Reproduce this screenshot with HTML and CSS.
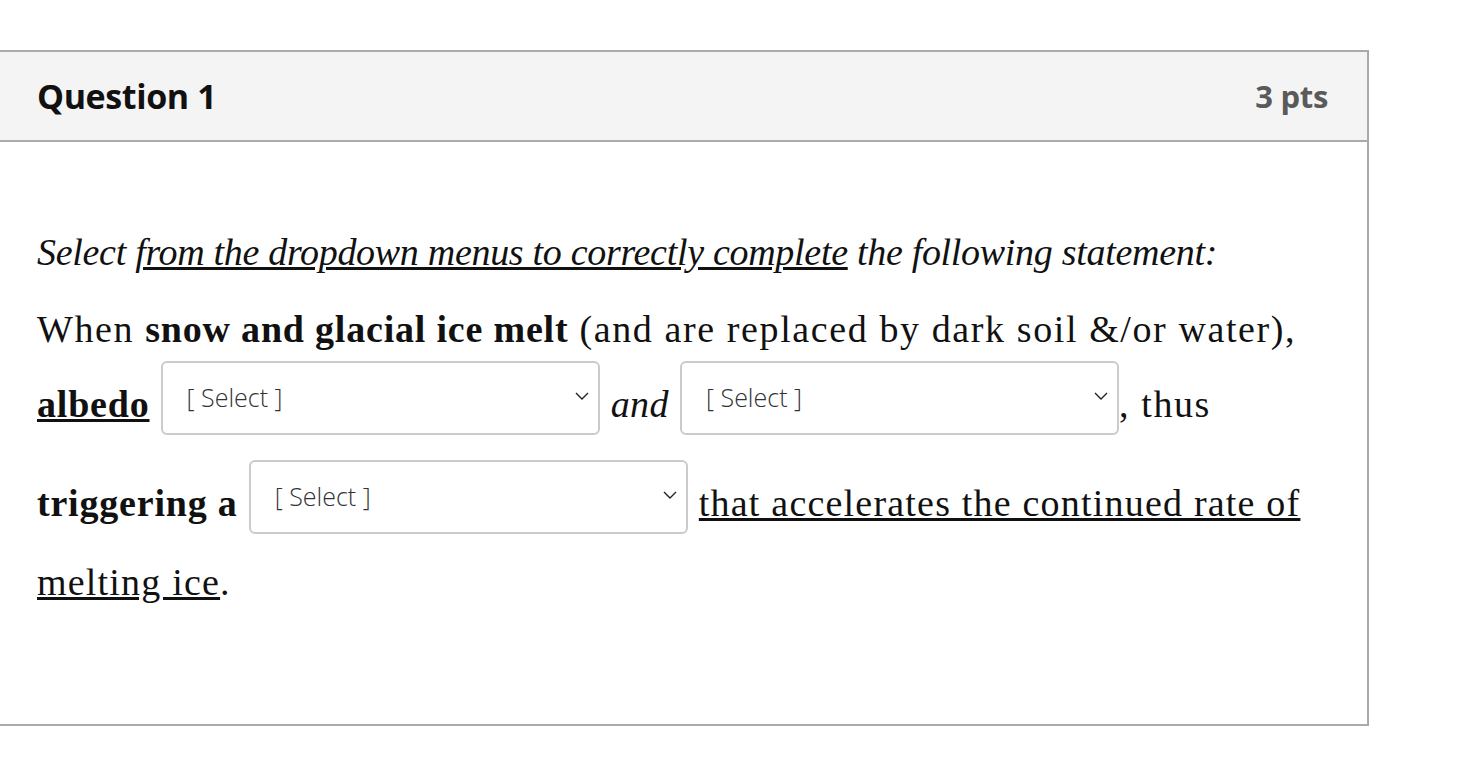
FILE: index.html
```html
<!DOCTYPE html>
<html>
<head>
<meta charset="utf-8">
<link rel="stylesheet" href="styles.css">
</head>
<body>
<div class="question">
  <div class="q-header">
    <span class="q-title">Question 1</span>
    <span class="q-pts">3 pts</span>
  </div>
  <div class="q-body">
    <p class="intro"><em>Select <u>from the dropdown menus to correctly complete</u> the following statement:</em></p>
    <p class="stmt">When <b>snow and glacial ice melt</b> (and are replaced by dark soil &amp;/or water), <b><u>albedo</u></b> <span class="sel"><span class="sel-inner"><span class="sel-text">[ Select ]</span><svg class="chev" viewBox="0 0 14 8" width="14" height="8"><path d="M1 1 L7 7 L13 1" fill="none" stroke="#222" stroke-width="1.4"/></svg></span></span> <em>and</em> <span class="sel"><span class="sel-inner"><span class="sel-text">[ Select ]</span><svg class="chev" viewBox="0 0 14 8" width="14" height="8"><path d="M1 1 L7 7 L13 1" fill="none" stroke="#222" stroke-width="1.4"/></svg></span></span>, thus <b>triggering a</b> <span class="sel sel-spaced"><span class="sel-inner"><span class="sel-text">[ Select ]</span><svg class="chev" viewBox="0 0 14 8" width="14" height="8"><path d="M1 1 L7 7 L13 1" fill="none" stroke="#222" stroke-width="1.4"/></svg></span></span> <u>that accelerates the continued rate of melting ice</u>.</p>
  </div>
</div>
</body>
</html>
```
FILE: styles.css
```css
html, body {
  margin: 0;
  padding: 0;
  background: #fff;
}
.question {
  margin: 50px 0 0 -2px;
  width: 1371px;
  border: 2px solid #aaaaaa;
  box-sizing: border-box;
}
.q-header {
  display: flex;
  justify-content: space-between;
  align-items: center;
  background: #f4f4f4;
  border-bottom: 2px solid #aaaaaa;
  height: 90px;
  padding: 0 39px 0 37px;
  box-sizing: border-box;
  font-family: "Open Sans", "Noto Sans", sans-serif;
  font-weight: 700;
}
.q-title {
  color: #111;
  font-size: 34px;
  letter-spacing: -0.4px;
}
.q-pts {
  color: #5a5a5a;
  font-size: 31px;
  letter-spacing: -0.3px;
}
.q-body {
  padding: 72px 37px 104px 37px;
  font-family: "Liberation Serif", serif;
  font-size: 38px;
  color: #111;
}
.q-body p {
  margin: 0;
}
.intro {
  line-height: 76px;
  letter-spacing: -0.3px;
  margin-bottom: 2px !important;
}
.stmt {
  line-height: 75px;
  letter-spacing: 1.6px;
}
.stmt b {
  letter-spacing: 0.8px;
}
.stmt em {
  letter-spacing: 0.4px;
}
.stmt > u {
  letter-spacing: 1.2px;
}
.sel {
  display: inline-block;
  width: 439px;
  height: 74px;
  box-sizing: border-box;
  border: 2px solid #cbcbcb;
  border-radius: 6px;
  margin-top: -8px;
  vertical-align: -18px;
  overflow: hidden;
  font-family: "Open Sans", sans-serif;
  font-weight: 300;
  font-size: 25px;
  letter-spacing: 0;
  color: #333;
  line-height: 1;
}
.sel-spaced {
  margin-top: 18px;
  margin-bottom: 11px;
  vertical-align: -29px;
}
.sel-inner {
  display: flex;
  align-items: center;
  justify-content: space-between;
  height: 100%;
  padding: 0 9px 0 24px;
}
.sel-text {
  margin-top: -2px;
}
.chev {
  margin-top: -4px;
}
```
